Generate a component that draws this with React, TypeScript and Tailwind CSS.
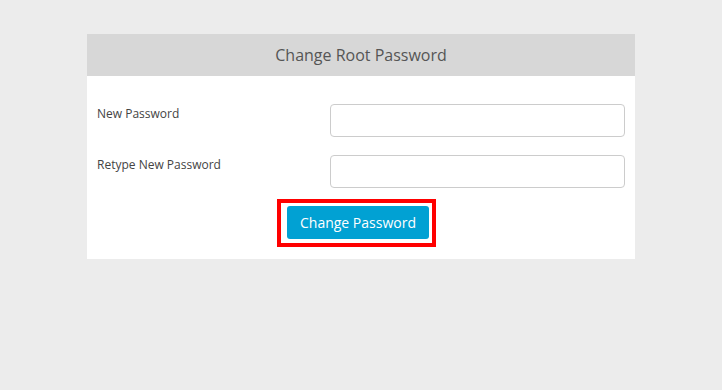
import React from 'react';

const App: React.FC = () => {
  return (
    <div className="min-h-[390px] w-full bg-[#ececec] pt-[34px] font-['Open_Sans',sans-serif]">
      <div className="ml-[87px] w-[548px] bg-white">
        <div className="flex h-[42px] items-center justify-center bg-[#d7d7d7]">
          <h2 className="text-[16px] text-[#555555]">Change Root Password</h2>
        </div>
        <div className="px-[10px] pt-[28px] pb-[12px]">
          <div className="flex items-start justify-between">
            <label className="pt-[1px] text-[12px] leading-[17px] text-[#444444]">New Password</label>
            <input
              type="password"
              className="h-[33px] w-[295px] rounded-[4px] border border-[#cccccc] bg-white px-2 text-[13px] outline-none"
            />
          </div>
          <div className="mt-[18px] flex items-start justify-between">
            <label className="pt-[1px] text-[12px] leading-[17px] text-[#444444]">Retype New Password</label>
            <input
              type="password"
              className="h-[33px] w-[295px] rounded-[4px] border border-[#cccccc] bg-white px-2 text-[13px] outline-none"
            />
          </div>
          <div className="mt-[11px] flex justify-center">
            <div className="mr-[9px] border-[4px] border-[#ff0000] pt-[3px] pr-[3px] pb-[4px] pl-[6px]">
              <button className="block h-[33px] w-[142px] rounded-[3px] bg-[#01a1d3] text-[14px] text-white">
                Change Password
              </button>
            </div>
          </div>
        </div>
      </div>
    </div>
  );
};

export default App;
